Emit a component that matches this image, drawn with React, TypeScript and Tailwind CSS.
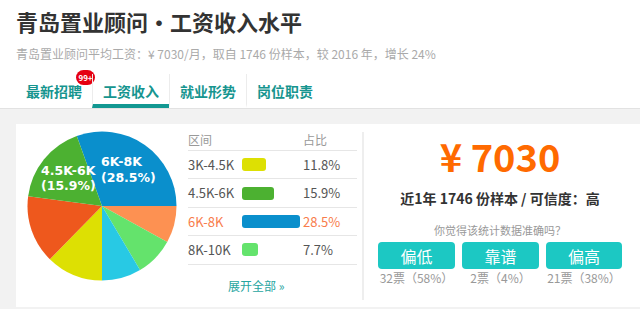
import React from 'react';

// 薪资区间数据
interface SalaryRange {
  label: string;
  percent: number;
  color: string;
  highlight?: boolean;
}

const salaryRanges: SalaryRange[] = [
  { label: '3K-4.5K', percent: 11.8, color: '#dde003' },
  { label: '4.5K-6K', percent: 15.9, color: '#4cb131' },
  { label: '6K-8K', percent: 28.5, color: '#0a8fcc', highlight: true },
  { label: '8K-10K', percent: 7.7, color: '#64e36c' },
];

// 饼图扇区（角度从12点方向顺时针）
const slices = [
  { from: 340.2, to: 450, color: '#0a8fcc' },
  { from: 90, to: 118.9, color: '#fd9152' },
  { from: 118.9, to: 149.3, color: '#64e36c' },
  { from: 149.3, to: 180, color: '#28c9e4' },
  { from: 180, to: 224.4, color: '#dde003' },
  { from: 224.4, to: 277.6, color: '#ee581d' },
  { from: 277.6, to: 340.2, color: '#4cb131' },
];

const votes = [
  { name: '偏低', count: '32票（58%）' },
  { name: '靠谱', count: '2票（4%）' },
  { name: '偏高', count: '21票（38%）' },
];

const tabs = ['最新招聘', '工资收入', '就业形势', '岗位职责'];

const CX = 75;
const CY = 75;
const R = 74.5;

const point = (deg: number) => {
  const rad = (deg * Math.PI) / 180;
  return [CX + R * Math.sin(rad), CY - R * Math.cos(rad)];
};

const slicePath = (from: number, to: number) => {
  const [x1, y1] = point(from);
  const [x2, y2] = point(to);
  const large = to - from > 180 ? 1 : 0;
  return `M${CX},${CY} L${x1},${y1} A${R},${R} 0 ${large} 1 ${x2},${y2} Z`;
};

const PieChart: React.FC = () => (
  <svg width="150" height="150" viewBox="0 0 150 150" className="shrink-0">
    {slices.map((s, i) => (
      <path key={i} d={slicePath(s.from, s.to)} fill={s.color} />
    ))}
    <g fill="#fff" fontFamily="DejaVu Sans, sans-serif" fontWeight="bold" fontSize="12.5">
      <text x="74" y="35">6K-8K</text>
      <text x="74" y="51">(28.5%)</text>
      <text x="14" y="44">4.5K-6K</text>
      <text x="14" y="59">(15.9%)</text>
    </g>
  </svg>
);

export default function App() {
  return (
    <div className="w-[640px] h-[309px] overflow-hidden bg-white font-['Noto_Sans_CJK_SC','Liberation_Sans',sans-serif]">
      {/* 标题 */}
      <div className="pl-4">
        <h1 className="mt-[7px] text-[22px] leading-[28px] font-bold text-[#333]">
          青岛置业顾问•工资收入水平
        </h1>
        <p className="mt-[11px] text-[12px] leading-[16px] text-[#aaa]">
          青岛置业顾问平均工资：¥ 7030/月，取自 1746 份样本，较 2016 年，增长 24%
        </p>

        {/* 标签页 */}
        <div className="mt-[12px] flex h-[34px]">
          {tabs.map((t, i) => (
            <div
              key={t}
              className={`relative flex items-center justify-center pt-[5px] text-[14px] font-bold text-[#16958f] ${
                i === 0 ? 'w-[76px]' : 'w-[77px] border-l border-[#ececec]'
              } ${i === 1 ? 'border-b-4 border-b-[#129892]' : 'border-b-4 border-b-transparent'}`}
            >
              {t}
              {i === 0 && (
                <span className="absolute left-[60px] -top-[4px] flex h-[15px] w-[19px] items-center justify-center rounded-full bg-[#e50012] text-[8px] font-bold leading-none text-white">
                  99+
                </span>
              )}
            </div>
          ))}
        </div>
      </div>

      {/* 内容区 */}
      <div className="h-[201px] border-t border-[#e2e2e2] bg-[#f2f2f2] pl-4 pt-[15px]">
        <div className="flex h-[183px] bg-white">
          {/* 饼图 + 表格 */}
          <div className="pl-[11px] pt-[7px]">
            <PieChart />
          </div>

          <div className="ml-[11px] mt-[6px] w-[169px]">
            <div className="flex h-[21px] items-center border-b border-[#e6e6e6] text-[12px] text-[#999]">
              <span className="w-[115px]">区间</span>
              <span>占比</span>
            </div>
            {salaryRanges.map((r) => (
              <div
                key={r.label}
                className={`flex h-[28.4px] items-center border-b border-[#e6e6e6] text-[13px] ${
                  r.highlight ? 'text-[#f87c4b]' : 'text-[#555]'
                }`}
              >
                <span className="w-[54px]">{r.label}</span>
                <div className="w-[61px]">
                  <div
                    className="h-[13px] rounded-[3px]"
                    style={{ width: `${r.percent * 2.04}px`, backgroundColor: r.color }}
                  />
                </div>
                <span>{r.percent}%</span>
              </div>
            ))}
            <div className="mt-[13px] pl-[40px] text-[12px] leading-[16px] text-[#27a5a0]">
              展开全部 »
            </div>
          </div>

          {/* 分割线 */}
          <div className="ml-[5px] mt-[8px] h-[168px] w-[2px] bg-[#eeeeee]" />

          {/* 平均薪资 */}
          <div className="flex w-[272px] flex-col items-center">
            <div className="mt-[12px] text-[38px] font-bold leading-[40px] text-[#ff6a00]">¥ 7030</div>
            <div className="mt-[12px] text-[14px] font-bold leading-[20px] text-[#333]">
              近1年 1746 份样本 / 可信度：高
            </div>
            <div className="mt-[14px] text-[11px] leading-[16px] text-[#999]">你觉得该统计数据准确吗？</div>
            <div className="mt-[4px] flex gap-[7px]">
              {votes.map((v, i) => (
                <div key={v.name} className="flex flex-col items-center">
                  <button
                    className={`h-[27px] rounded-[4px] bg-[#1cc8c3] text-[16px] text-white ${
                      i === 2 ? 'w-[76px]' : 'w-[77px]'
                    }`}
                  >
                    {v.name}
                  </button>
                  <span className="mt-[1px] text-[12px] leading-[16px] text-[#999]">{v.count}</span>
                </div>
              ))}
            </div>
          </div>
        </div>
      </div>
    </div>
  );
}
